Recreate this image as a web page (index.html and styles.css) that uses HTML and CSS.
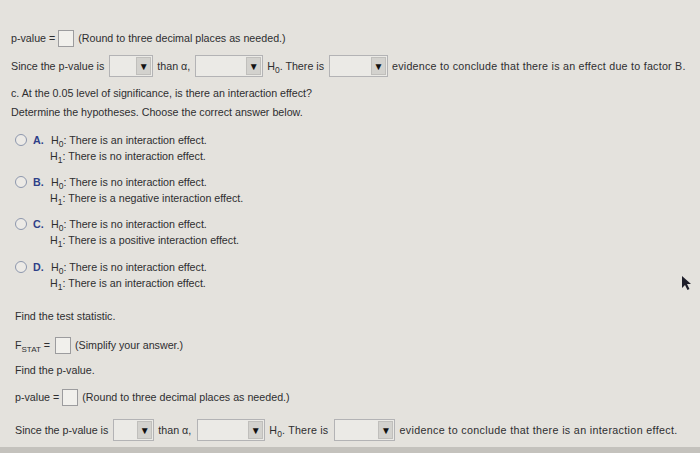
FILE: index.html
```html
<!DOCTYPE html>
<html>
<head>
<meta charset="utf-8">
<link rel="stylesheet" href="styles.css">
</head>
<body>
<div class="page">
  <div class="top">
    <div class="row r1">
      <span>p-value =</span><span class="box"></span><span class="note">(Round to three decimal places as needed.)</span>
    </div>
    <div class="row r2">
      <span>Since the p-value is</span>
      <span class="dd w43"><span class="arr">&#9660;</span></span>
      <span>than α,</span>
      <span class="dd w67"><span class="arr">&#9660;</span></span>
      <span>H<sub>0</sub>. There is</span>
      <span class="dd w58"><span class="arr">&#9660;</span></span>
      <span class="wide">evidence to conclude that there is an effect due to factor B.</span>
    </div>
    <div class="row r3"><span>c. At the 0.05 level of significance, is there an interaction effect?</span></div>
    <div class="row r4"><span>Determine the hypotheses. Choose the correct answer below.</span></div>

    <div class="opt oa">
      <div class="oline"><span class="radio"></span><span class="letter">A.</span><span>H<sub>0</sub>: There is an interaction effect.</span></div>
      <div class="oline sub"><span>H<sub>1</sub>: There is no interaction effect.</span></div>
    </div>
    <div class="opt ob">
      <div class="oline"><span class="radio"></span><span class="letter">B.</span><span>H<sub>0</sub>: There is no interaction effect.</span></div>
      <div class="oline sub"><span>H<sub>1</sub>: There is a negative interaction effect.</span></div>
    </div>
    <div class="opt oc">
      <div class="oline"><span class="radio"></span><span class="letter">C.</span><span>H<sub>0</sub>: There is no interaction effect.</span></div>
      <div class="oline sub"><span>H<sub>1</sub>: There is a positive interaction effect.</span></div>
    </div>
    <div class="opt od">
      <div class="oline"><span class="radio"></span><span class="letter">D.</span><span>H<sub>0</sub>: There is no interaction effect.</span></div>
      <div class="oline sub"><span>H<sub>1</sub>: There is an interaction effect.</span></div>
    </div>
  </div>

  <div class="bottom">
    <div class="row b1"><span>Find the test statistic.</span></div>
    <div class="row b2"><span>F<sub class="stat">STAT</sub> =</span><span class="box fbox"></span><span class="note">(Simplify your answer.)</span></div>
    <div class="row b3"><span>Find the p-value.</span></div>
    <div class="row b4"><span>p-value =</span><span class="box"></span><span class="note">(Round to three decimal places as needed.)</span></div>
    <div class="row b5">
      <span>Since the p-value is</span>
      <span class="dd w41"><span class="arr">&#9660;</span></span>
      <span>than α,</span>
      <span class="dd w67 m2"><span class="arr">&#9660;</span></span>
      <span class="ls">H<sub>0</sub>. There is</span>
      <span class="dd w60 m3"><span class="arr">&#9660;</span></span>
      <span class="wider">evidence to conclude that there is an interaction effect.</span>
    </div>
  </div>
  <div class="cursor">
    <svg width="12" height="16" viewBox="0 0 12 16"><path d="M1 1 L1 13 L4 10 L6.5 15 L8.5 14 L6 9 L10 9 Z" fill="#1e1e2a"/></svg>
  </div>
</div>
<div class="edge"></div>
</body>
</html>
```
FILE: styles.css
```css
html, body {
  margin: 0;
  padding: 0;
}
body {
  width: 700px;
  height: 453px;
  overflow: hidden;
  background: #e4e2dd;
  font-family: "Liberation Sans", Arial, sans-serif;
  font-size: 10.7px;
  color: #2e2e30;
  position: relative;
}
.page {
  height: 447px;
  position: relative;
}
.top {
  padding: 28px 0 0 11px;
}
.bottom {
  padding: 17px 0 0 15px;
}
.row {
  display: flex;
  align-items: center;
  height: 16px;
  white-space: nowrap;
}
.wide { letter-spacing: 0.25px; }
.wider { letter-spacing: 0.35px; }
.ls { letter-spacing: 0.2px; }
sub {
  font-size: 8.5px;
  vertical-align: -3px;
  line-height: 0;
}
sub.stat {
  font-size: 8px;
  vertical-align: -3px;
}
.box {
  display: inline-block;
  width: 14px;
  height: 15px;
  border: 1px solid #9c9c9e;
  background: #f1f0ec;
  margin: 0 4px 0 3px;
}
.fbox { margin-left: 5px; }
.r1 { height: 20px; }
.r2 { height: 24px; margin-top: 6px; }
.r3 { margin-top: 7px; }
.r4 { margin-top: 3px; }

.dd {
  display: inline-flex;
  justify-content: flex-end;
  align-items: stretch;
  height: 22px;
  border: 1px solid #b3b3b5;
  background: #ebeae6;
  margin: 0 4px 0 5px;
  box-sizing: border-box;
}
.m2 { margin-left: 6px; }
.m3 { margin-left: 6px; }
.w43 { width: 44px; }
.w41 { width: 41px; }
.w67 { width: 68px; }
.w58 { width: 59px; }
.w60 { width: 61px; }
.arr {
  width: 13px;
  background: #d3d2ce;
  border: 1px solid #c0bfbc;
  color: #111;
  font-size: 10px;
  display: flex;
  align-items: center;
  justify-content: center;
  margin: 1px;
}

.opt { padding-left: 4px; }
.oa { margin-top: 12px; }
.ob { margin-top: 10px; }
.oc { margin-top: 10px; }
.od { margin-top: 11px; }
.oline {
  display: flex;
  align-items: center;
  height: 16px;
  white-space: nowrap;
}
.oline.sub { padding-left: 35px; }
.radio {
  width: 10px;
  height: 10px;
  border: 1px solid #8d97ad;
  border-radius: 50%;
  background: #eceae6;
  margin-right: 6px;
}
.letter {
  color: #2f3f88;
  font-weight: bold;
  width: 18px;
}

.b2 { height: 20px; margin-top: 11px; }
.b3 { margin-top: 7px; }
.b4 { height: 20px; margin-top: 9px; }
.b5 { height: 24px; margin-top: 11px; }

.cursor {
  position: absolute;
  left: 681px;
  top: 275px;
}
.edge {
  height: 6px;
  background: #c4c2bd;
}
```
